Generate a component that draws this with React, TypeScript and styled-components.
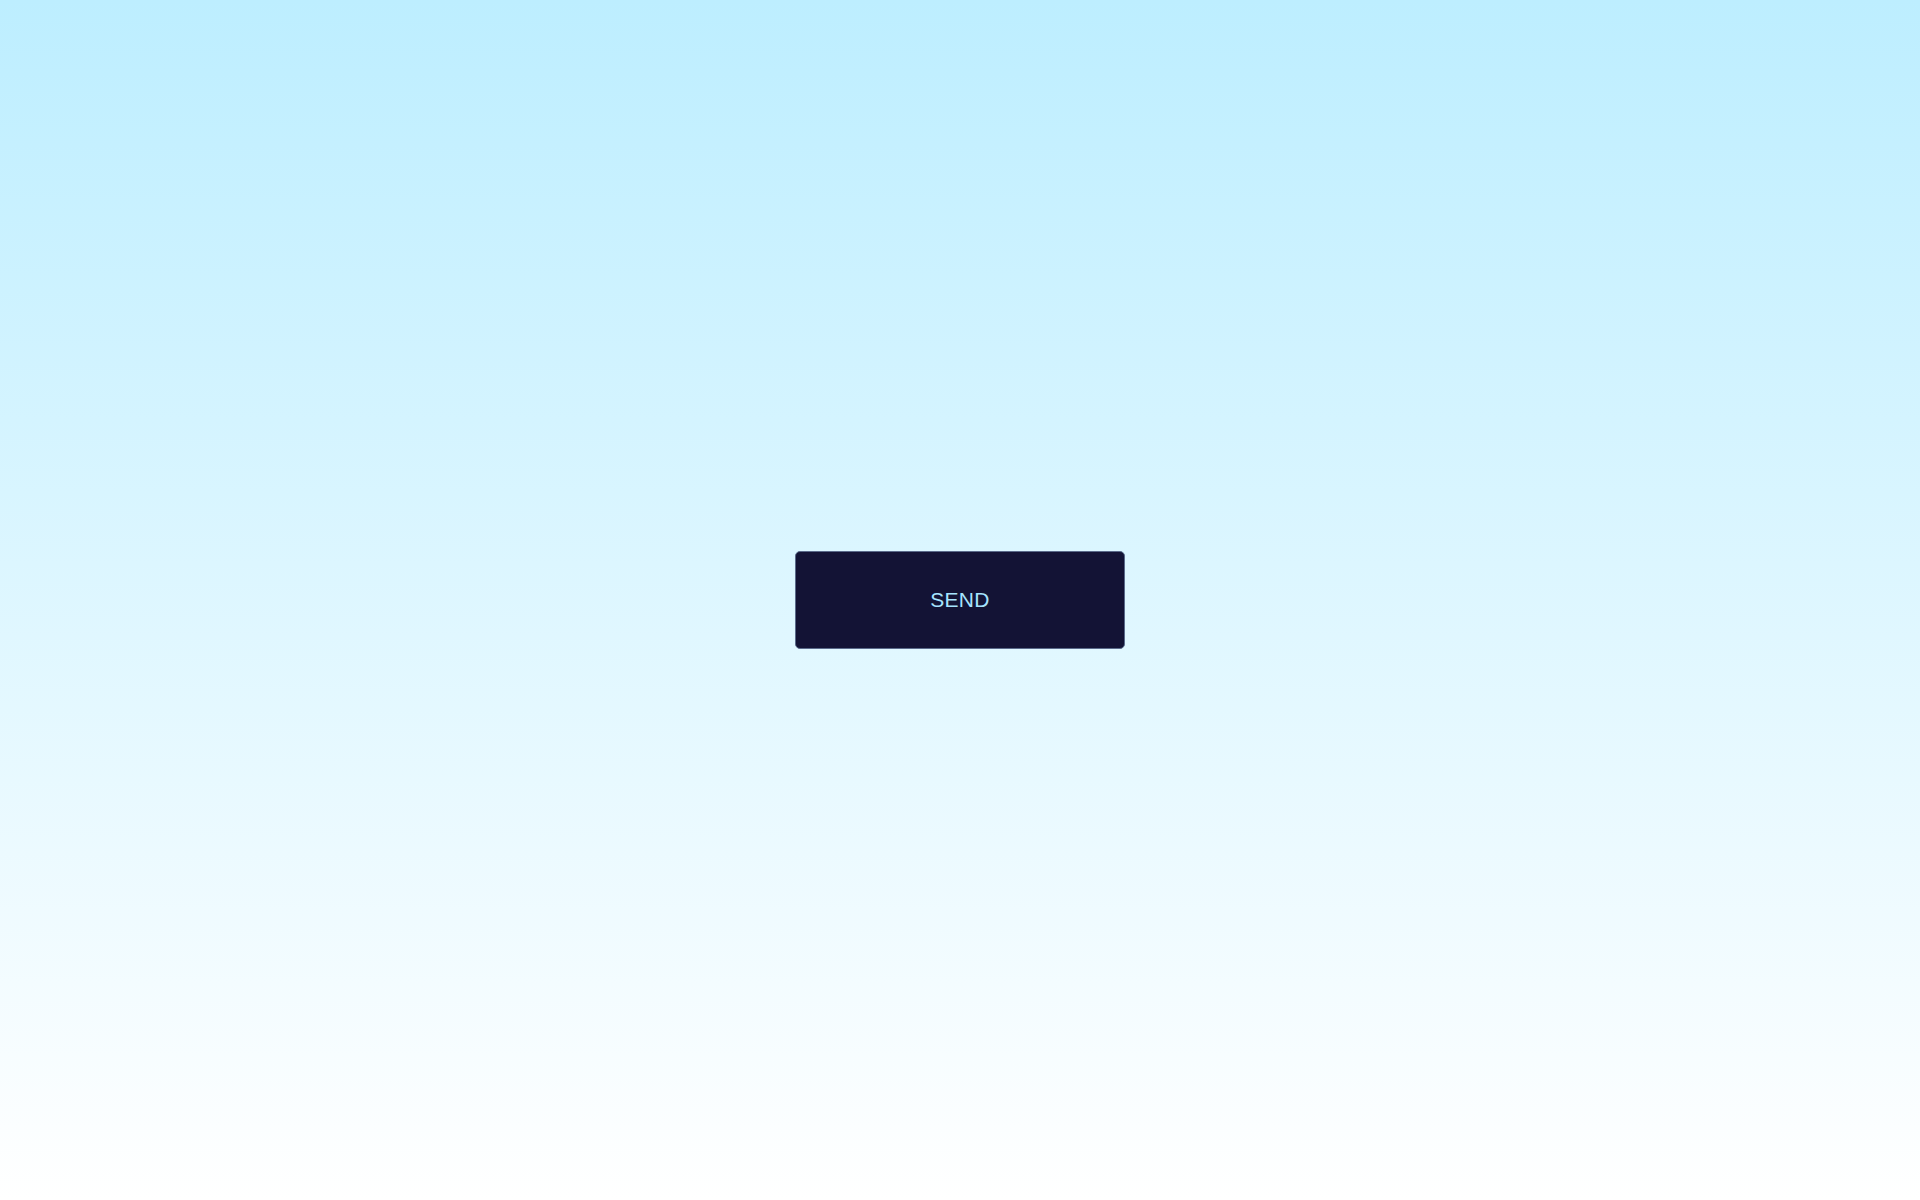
import React from "react";
import styled, { createGlobalStyle } from "styled-components";

const GlobalStyle = createGlobalStyle`
  html, body {
    margin: 0;
    padding: 0;
  }
  body {
    font-family: "Liberation Sans", Arial, sans-serif;
  }
`;

const Page = styled.main`
  min-height: 100vh;
  display: flex;
  align-items: center;
  justify-content: center;
  background: linear-gradient(180deg, #bdeeff 0%, #ffffff 100%);
`;

const SendButton = styled.button`
  width: 330px;
  height: 98px;
  background: #131335;
  color: #a6e4ff;
  border: 1px solid #5a6a8a;
  border-radius: 5px;
  font-family: "Liberation Sans", Arial, sans-serif;
  font-size: 21px;
  letter-spacing: 0.3px;
  text-transform: uppercase;
  cursor: pointer;
`;

export default function App() {
  return (
    <>
      <GlobalStyle />
      <Page>
        <SendButton type="button">Send</SendButton>
      </Page>
    </>
  );
}
